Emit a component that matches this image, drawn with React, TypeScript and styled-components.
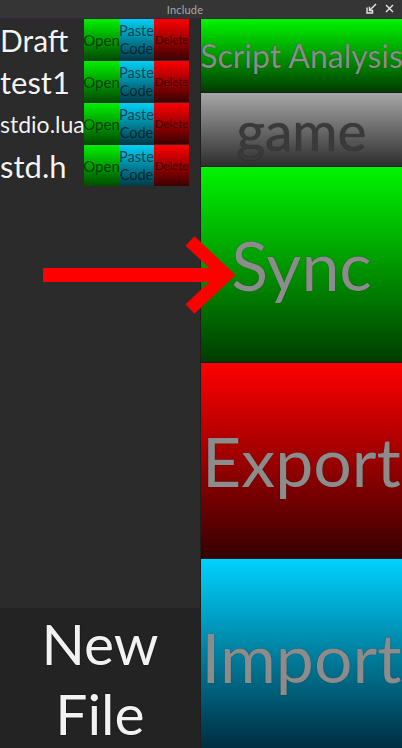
import React, { FC } from 'react';
import styled, { createGlobalStyle } from 'styled-components';

type Tone = 'green' | 'cyan' | 'red' | 'gray';

const gradients: Record<Tone, string> = {
	green: 'linear-gradient(180deg, #00f400 0%, #003c00 100%)',
	cyan: 'linear-gradient(180deg, #00d2ff 0%, #00283a 100%)',
	red: 'linear-gradient(180deg, #ff0000 0%, #360000 100%)',
	gray: 'linear-gradient(180deg, #a6a6a6 0%, #2e2e2e 100%)',
};

const smallGradients: Record<Tone, string> = {
	green: 'linear-gradient(180deg, #00f000 0%, #004c00 100%)',
	cyan: 'linear-gradient(180deg, #00d0f4 0%, #003a48 100%)',
	red: 'linear-gradient(180deg, #ff0000 0%, #3c0000 100%)',
	gray: 'linear-gradient(180deg, #a6a6a6 0%, #2e2e2e 100%)',
};

interface IFile {
	name: string;
	size: number;
}

const files: IFile[] = [
	{ name: 'Draft', size: 30 },
	{ name: 'test1', size: 31 },
	{ name: 'stdio.lua', size: 23 },
	{ name: 'std.h', size: 31 },
];

interface IAction {
	label: string;
	tone: Tone;
	height: number;
	size: number;
	dark?: boolean;
}

const actions: IAction[] = [
	{ label: 'Script Analysis', tone: 'green', height: 74, size: 32 },
	{ label: 'game', tone: 'gray', height: 74, size: 55, dark: true },
	{ label: 'Sync', tone: 'green', height: 196, size: 68 },
	{ label: 'Export', tone: 'red', height: 196, size: 68 },
	{ label: 'Import', tone: 'cyan', height: 196, size: 68 },
];

const DockIcon: FC = () => (
	<svg width="11" height="11" viewBox="0 0 11 11" fill="none" stroke="#e6e6e6" strokeWidth="1.4">
		<path d="M1 4.5 V10 H6.5 V8" />
		<path d="M10 1 L4 7" />
		<path d="M3.5 3.8 V7.5 H7.2" />
	</svg>
);

const CloseIcon: FC = () => (
	<svg width="9" height="9" viewBox="0 0 9 9" fill="none" stroke="#e6e6e6" strokeWidth="1.4">
		<path d="M1 1 L8 8 M8 1 L1 8" />
	</svg>
);

const Arrow: FC = () => (
	<ArrowLayer width="402" height="748" viewBox="0 0 402 748">
		<line x1="43" y1="275" x2="226" y2="275" stroke="#ff0000" strokeWidth="14" />
		<polyline
			points="190,241 226,275 190,309"
			fill="none"
			stroke="#ff0000"
			strokeWidth="13"
			strokeLinejoin="miter"
			strokeMiterlimit="4"
		/>
	</ArrowLayer>
);

const App: FC = () => (
	<>
		<GlobalStyle />
		<Window>
			<TitleBar>
				<Title>Include</Title>
				<TitleIcons>
					<DockIcon />
					<CloseIcon />
				</TitleIcons>
			</TitleBar>
			<Body>
				<LeftPanel>
					<FileList>
						{files.map((file) => (
							<FileRow key={file.name}>
								<FileName $size={file.size}>{file.name}</FileName>
								<SmallButton $tone="green">
									<SmallLabel $size={15}>Open</SmallLabel>
								</SmallButton>
								<SmallButton $tone="cyan">
									<SmallLabel $size={14.5}>
										Paste
										<br />
										Code
									</SmallLabel>
								</SmallButton>
								<SmallButton $tone="red">
									<SmallLabel $size={11.5}>Delete</SmallLabel>
								</SmallButton>
							</FileRow>
						))}
					</FileList>
					<NewFile>
						New
						<br />
						File
					</NewFile>
				</LeftPanel>
				<RightColumn>
					{actions.map((action) => (
						<BigButton key={action.label} $tone={action.tone} $height={action.height}>
							<BigLabel $size={action.size} $dark={action.dark}>
								{action.label}
							</BigLabel>
						</BigButton>
					))}
				</RightColumn>
			</Body>
			<Arrow />
		</Window>
	</>
);

export default App;

const GlobalStyle = createGlobalStyle`
	html, body {
		margin: 0;
		padding: 0;
		background: #2b2b2b;
	}
	body {
		font-family: Lato, 'Open Sans', sans-serif;
	}
`;

const Window = styled('div')`
	position: relative;
	width: 402px;
	height: 748px;
	display: flex;
	flex-direction: column;
	overflow: hidden;
	background: #2b2b2b;
`;

const TitleBar = styled('div')`
	height: 18px;
	flex-shrink: 0;
	display: flex;
	align-items: center;
	justify-content: center;
	position: relative;
	background: #353535;
	border-bottom: 1px solid #3a2242;
	padding-right: 34px;
`;

const Title = styled('span')`
	font-size: 11px;
	color: #a9a9a9;
	letter-spacing: 0.2px;
	padding-left: 2px;
`;

const TitleIcons = styled('div')`
	position: absolute;
	right: 8px;
	top: 3px;
	display: flex;
	align-items: center;
	gap: 8px;
`;

const Body = styled('div')`
	flex: 1;
	display: flex;
	min-height: 0;
`;

const LeftPanel = styled('div')`
	width: 200px;
	flex-shrink: 0;
	display: flex;
	flex-direction: column;
	background: #2b2b2b;
`;

const FileList = styled('div')`
	display: flex;
	flex-direction: column;
`;

const FileRow = styled('div')`
	display: flex;
	height: 41px;
	margin-bottom: 1px;
`;

const FileName = styled('div')<{ $size: number }>`
	width: 84px;
	display: flex;
	align-items: center;
	font-size: ${(p) => p.$size}px;
	color: #f4f4f4;
	white-space: nowrap;
	overflow: hidden;
	text-shadow: 0 0 1px rgba(0, 0, 0, 0.7);
`;

const SmallButton = styled('div')<{ $tone: Tone }>`
	width: 35px;
	display: flex;
	align-items: center;
	justify-content: center;
	background: ${(p) => smallGradients[p.$tone]};
	overflow: hidden;
`;

const SmallLabel = styled('span')<{ $size: number }>`
	font-size: ${(p) => p.$size}px;
	line-height: 1.2;
	text-align: center;
	color: rgba(0, 0, 0, 0.6);
	white-space: nowrap;
`;

const NewFile = styled('div')`
	margin-top: auto;
	height: 140px;
	display: flex;
	align-items: center;
	justify-content: center;
	text-align: center;
	background: #232323;
	font-size: 57px;
	line-height: 70px;
	color: #f2f2f2;
	text-shadow: 0 0 1px #000, 0 0 1px #000;
`;

const RightColumn = styled('div')`
	width: 202px;
	flex-shrink: 0;
	display: flex;
	flex-direction: column;
	border-left: 1px solid #1e1e1e;
	box-sizing: border-box;
`;

const BigButton = styled('div')<{ $tone: Tone; $height: number }>`
	height: ${(p) => p.$height}px;
	flex-shrink: 0;
	box-sizing: border-box;
	border-bottom: 1px solid #1a1a1a;
	display: flex;
	align-items: center;
	justify-content: center;
	background: ${(p) => gradients[p.$tone]};
	overflow: hidden;
`;

const BigLabel = styled('span')<{ $size: number; $dark?: boolean }>`
	font-size: ${(p) => p.$size}px;
	color: ${(p) => (p.$dark ? '#3a3a3a' : '#8c8c8c')};
	white-space: nowrap;
	text-shadow: 0 0 1px rgba(0, 0, 0, 0.55);
`;

const ArrowLayer = styled('svg')`
	position: absolute;
	left: 0;
	top: 0;
	pointer-events: none;
`;
